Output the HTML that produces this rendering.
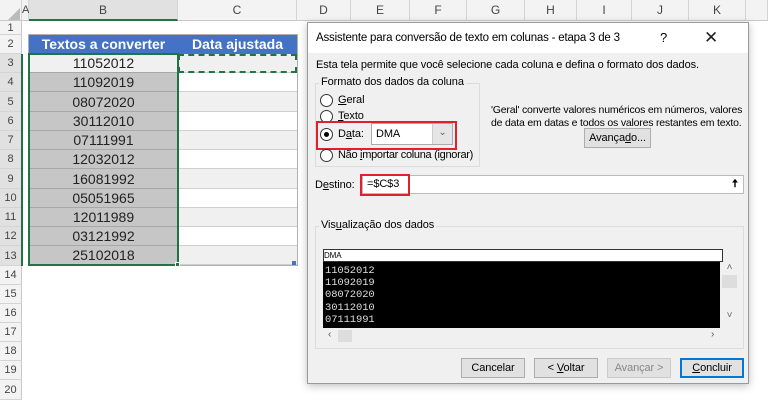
<!DOCTYPE html>
<html><head><meta charset="utf-8"><style>
*{margin:0;padding:0;box-sizing:border-box}
body{width:768px;height:400px;overflow:hidden;background:#fff;font-family:"Liberation Sans",sans-serif;position:relative}
.a{position:absolute;white-space:nowrap}
.ch{position:absolute;top:0;height:21px;background:#f3f3f3;border-right:1px solid #d4d4d4;border-bottom:1px solid #c8c8c8;font-size:12px;color:#444;text-align:center;line-height:21px}
.rh{position:absolute;left:0;width:22px;background:#f3f3f3;border-bottom:1px solid #d4d4d4;border-right:1px solid #c8c8c8;font-size:11px;color:#444;text-align:center}
.cb{position:absolute;left:29px;width:149px;background:#c6c6c6;border-bottom:1px solid #a8a8a8;font-size:14px;color:#222;text-align:center}
.cc{position:absolute;left:178px;width:119px;border-bottom:1px solid #d0d0d0;background:#fff}
.dlg{font-size:11px;color:#000;letter-spacing:-0.1px}
.btn{position:absolute;height:20px;background:#e1e1e1;border:1px solid #adadad;font-size:11px;text-align:center;line-height:18px}
.rad{position:absolute;width:13px;height:13px;border:1px solid #333;border-radius:50%;background:#fff}
.mono{font-family:"Liberation Mono",monospace;font-size:10.5px;color:#ddd;line-height:12.2px}
</style></head><body>
<div class="ch" style="left:0;width:22px;background:#f3f3f3"></div>
<svg class="a" style="left:8px;top:8px" width="12" height="12"><polygon points="12,0 12,12 0,12" fill="#bbb"/></svg>
<div class="ch" style="left:22px;width:7px;font-size:11px">A</div>
<div class="ch" style="left:29px;width:149px;background:#e1e1e1;border-bottom:2px solid #217346">B</div>
<div class="ch" style="left:178px;width:119px">C</div>
<div class="ch" style="left:297px;width:54px">D</div>
<div class="ch" style="left:351px;width:59px">E</div>
<div class="ch" style="left:410px;width:57px">F</div>
<div class="ch" style="left:467px;width:58px">G</div>
<div class="ch" style="left:525px;width:52px">H</div>
<div class="ch" style="left:577px;width:55px">I</div>
<div class="ch" style="left:632px;width:57px">J</div>
<div class="ch" style="left:689px;width:57px">K</div>
<div class="ch" style="left:746px;width:22px"></div>
<div class="rh" style="top:21px;height:14px;line-height:14px">1</div>
<div class="rh" style="top:35px;height:19px;line-height:19px">2</div>
<div class="rh" style="top:54px;height:19px;line-height:19px;background:#e1e1e1">3</div>
<div class="rh" style="top:73px;height:19px;line-height:19px;background:#e1e1e1">4</div>
<div class="rh" style="top:92px;height:20px;line-height:20px;background:#e1e1e1">5</div>
<div class="rh" style="top:112px;height:19px;line-height:19px;background:#e1e1e1">6</div>
<div class="rh" style="top:131px;height:19px;line-height:19px;background:#e1e1e1">7</div>
<div class="rh" style="top:150px;height:19px;line-height:19px;background:#e1e1e1">8</div>
<div class="rh" style="top:169px;height:20px;line-height:20px;background:#e1e1e1">9</div>
<div class="rh" style="top:189px;height:19px;line-height:19px;background:#e1e1e1">10</div>
<div class="rh" style="top:208px;height:19px;line-height:19px;background:#e1e1e1">11</div>
<div class="rh" style="top:227px;height:19px;line-height:19px;background:#e1e1e1">12</div>
<div class="rh" style="top:246px;height:20px;line-height:20px;background:#e1e1e1">13</div>
<div class="rh" style="top:266px;height:19px;line-height:19px">14</div>
<div class="rh" style="top:285px;height:19px;line-height:19px">15</div>
<div class="rh" style="top:304px;height:19px;line-height:19px">16</div>
<div class="rh" style="top:323px;height:19px;line-height:19px">17</div>
<div class="rh" style="top:342px;height:19px;line-height:19px">18</div>
<div class="rh" style="top:361px;height:19px;line-height:19px">19</div>
<div class="rh" style="top:380px;height:20px;line-height:20px">20</div>
<div class="a" style="left:21px;top:54px;width:2px;height:212px;background:#217346"></div>
<div class="a" style="left:29px;top:35px;width:268px;height:19px;background:#4472c4;color:#fff;font-weight:bold;font-size:14px;line-height:19px">
<span class="a" style="left:0;width:149px;text-align:center">Textos a converter</span>
<span class="a" style="left:149px;width:119px;text-align:center">Data ajustada</span></div>
<div class="cb" style="top:54px;height:19px;line-height:19px;background:#f0f0f0">11052012</div>
<div class="cb" style="top:73px;height:19px;line-height:19px">11092019</div>
<div class="cb" style="top:92px;height:20px;line-height:20px">08072020</div>
<div class="cb" style="top:112px;height:19px;line-height:19px">30112010</div>
<div class="cb" style="top:131px;height:19px;line-height:19px">07111991</div>
<div class="cb" style="top:150px;height:19px;line-height:19px">12032012</div>
<div class="cb" style="top:169px;height:20px;line-height:20px">16081992</div>
<div class="cb" style="top:189px;height:19px;line-height:19px">05051965</div>
<div class="cb" style="top:208px;height:19px;line-height:19px">12011989</div>
<div class="cb" style="top:227px;height:19px;line-height:19px">03121992</div>
<div class="cb" style="top:246px;height:19px;line-height:19px">25102018</div>
<div class="cc" style="top:54px;height:19px;background:#f0f0f0"></div>
<div class="cc" style="top:73px;height:19px"></div>
<div class="cc" style="top:92px;height:20px;background:#f0f0f0"></div>
<div class="cc" style="top:112px;height:19px"></div>
<div class="cc" style="top:131px;height:19px;background:#f0f0f0"></div>
<div class="cc" style="top:150px;height:19px"></div>
<div class="cc" style="top:169px;height:20px;background:#f0f0f0"></div>
<div class="cc" style="top:189px;height:19px"></div>
<div class="cc" style="top:208px;height:19px;background:#f0f0f0"></div>
<div class="cc" style="top:227px;height:19px"></div>
<div class="cc" style="top:246px;height:19px;background:#f0f0f0"></div>
<div class="a" style="left:28px;top:34px;width:270px;height:232px;border:1px solid #b0b0b0"></div>
<div class="a" style="left:28px;top:53px;width:151px;height:213px;border:2px solid #217346"></div>
<div class="a" style="left:175px;top:262px;width:5px;height:5px;background:#217346;border:1px solid #fff"></div>
<div class="a" style="left:178px;top:54px;width:119px;height:19px;border:2px dashed #217346"></div>
<div class="a" style="left:292px;top:261px;width:4px;height:4px;background:#4472c4"></div>
<div class="a dlg" style="left:307px;top:22px;width:442px;height:362px;background:#f0f0f0;border:1px solid #999;box-shadow:0 2px 8px rgba(0,0,0,.25)">
<div class="a" style="left:0;top:0;width:440px;height:30px;background:#fff;font-size:11.5px;line-height:30px;padding-left:8px;letter-spacing:-0.2px">Assistente para conversão de texto em colunas - etapa 3 de 3
<span class="a" style="left:352px;top:0;font-size:13px">?</span>
<span class="a" style="left:396px;top:0;font-size:17px;color:#222">✕</span></div>
<div class="a" style="left:8px;top:36px">Esta tela permite que você selecione cada coluna e defina o formato dos dados.</div>
<div class="a" style="left:7px;top:60px;width:165px;height:84px;border:1px solid #dcdcdc"></div>
<div class="a" style="left:11px;top:53px;background:#f0f0f0;padding:0 2px">Formato dos dados da coluna</div>
<div class="rad" style="left:12px;top:71px"></div><div class="a" style="left:30px;top:71px"><u>G</u>eral</div>
<div class="rad" style="left:12px;top:87px"></div><div class="a" style="left:30px;top:87px"><u>T</u>exto</div>
<div class="rad" style="left:12px;top:105px"></div><div class="a" style="left:16px;top:109px;width:5px;height:5px;border-radius:50%;background:#000"></div>
<div class="a" style="left:30px;top:105px">D<u>a</u>ta:</div>
<div class="a" style="left:63px;top:100px;width:82px;height:22px;background:#fff;border:1px solid #aaa;line-height:20px;padding-left:4px">DMA</div>
<div class="a" style="left:124px;top:101px;width:20px;height:20px;background:#e5e5e5;border-left:1px solid #ccc;text-align:center;line-height:18px;color:#666;font-size:10px">⌄</div>
<div class="a" style="left:8px;top:98px;width:141px;height:29px;border:2px solid #e0202c"></div>
<div class="rad" style="left:12px;top:126px"></div><div class="a" style="left:30px;top:126px;letter-spacing:-0.3px">Não <u>i</u>mportar coluna (ignorar)</div>
<div class="a" style="left:183px;top:81px;line-height:13px;font-size:10.5px;letter-spacing:-0.2px">'Geral' converte valores numéricos em números, valores<br>de data em datas e todos os valores restantes em texto.</div>
<div class="btn" style="left:276px;top:105px;width:67px">Avança<u>d</u>o...</div>
<div class="a" style="left:7px;top:156px">D<u>e</u>stino:</div>
<div class="a" style="left:54px;top:152px;width:382px;height:19px;background:#fff;border:1px solid #bbb;line-height:17px;padding-left:4px">=$C$3</div>
<div class="a" style="left:419px;top:153px;width:16px;height:17px;text-align:center;font-size:11px;line-height:17px;font-weight:bold">🠅</div>
<div class="a" style="left:52px;top:151px;width:50px;height:22px;border:2px solid #e0202c"></div>
<div class="a" style="left:7px;top:203px;width:429px;height:123px;border:1px solid #dcdcdc"></div>
<div class="a" style="left:11px;top:196px;background:#f0f0f0;padding:0 2px">Vis<u>u</u>alização dos dados</div>
<div class="a" style="left:15px;top:226px;width:400px;height:13px;background:#fff;border:1px solid #333;font-size:8px;line-height:12px">DMA</div>
<div class="a mono" style="left:15px;top:239px;width:397px;height:66px;background:#000;padding:3px 2px">11052012<br>11092019<br>08072020<br>30112010<br>07111991</div>
<div class="a" style="left:413px;top:239px;width:17px;height:66px;color:#666;font-size:10px;text-align:center">˄<div style="height:13px;background:#ddd;margin:2px 1px"></div><div style="margin-top:22px">˅</div></div>
<div class="a" style="left:20px;top:306px;font-size:10px;color:#555">‹</div>
<div class="a" style="left:30px;top:307px;width:14px;height:12px;background:#ddd"></div>
<div class="a" style="left:403px;top:306px;font-size:10px;color:#555">›</div>
<div class="btn" style="left:153px;top:335px;width:64px">Cancelar</div>
<div class="btn" style="left:226px;top:335px;width:64px">&lt; <u>V</u>oltar</div>
<div class="btn" style="left:299px;top:335px;width:64px;color:#888;border-color:#ccc">Avançar &gt;</div>
<div class="btn" style="left:372px;top:335px;width:64px;border:1px solid #0078d7;box-shadow:inset 0 0 0 1px #0078d7"><u>C</u>oncluir</div>
</div>
</body></html>
